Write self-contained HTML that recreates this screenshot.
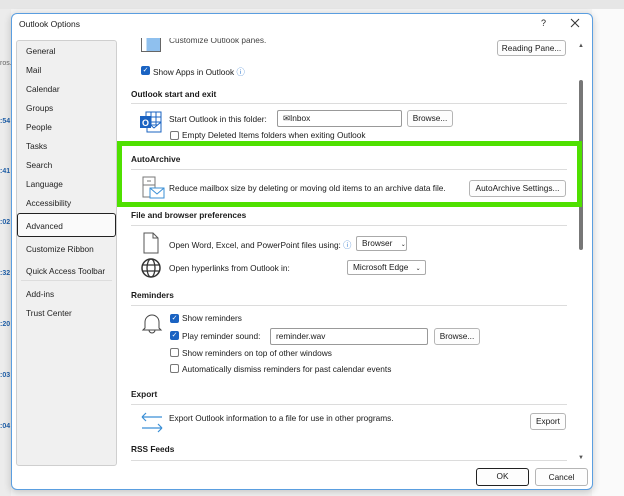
<!DOCTYPE html><html><head><style>
*{margin:0;padding:0;box-sizing:border-box}
body{width:624px;height:496px;background:#f3f3f3;position:relative;overflow:hidden;font-family:"Liberation Sans",sans-serif;font-size:8.3px;color:#1a1a1a}
.a{position:absolute;white-space:nowrap}
.b{font-weight:bold}
.ln{position:absolute;height:1px;background:#dcdcdc;left:131px;width:436px}
.btn{position:absolute;border:1px solid #b5b5b5;border-radius:3px;background:#fdfdfd;text-align:center;line-height:14px}
.cb{position:absolute;width:9px;height:9px;border:1px solid #777;border-radius:2px;background:#fff}
.cb.on{background:#1a63c2;border-color:#1a63c2;color:#fff;font-size:7px;line-height:7px;text-align:center}
.sb{position:absolute;left:28px;color:#222}
.in{position:absolute;border:1px solid #999;border-radius:2px;background:#fff;padding-left:5px;line-height:14px}
</style></head><body>
<div class="a" style="left:0;top:0;width:624px;height:9px;background:#e6e6e6"></div>
<div class="a" style="left:0;top:9px;width:11px;height:487px;background:#ececec"></div>
<div class="a" style="left:0;top:60px;font-size:7px;color:#666">ros.</div>
<div class="a" style="left:0;top:118px;font-size:7px;color:#1f5fa8;font-weight:bold">:54</div>
<div class="a" style="left:0;top:168px;font-size:7px;color:#1f5fa8;font-weight:bold">:41</div>
<div class="a" style="left:0;top:219px;font-size:7px;color:#1f5fa8;font-weight:bold">:02</div>
<div class="a" style="left:0;top:270px;font-size:7px;color:#1f5fa8;font-weight:bold">:32</div>
<div class="a" style="left:0;top:321px;font-size:7px;color:#1f5fa8;font-weight:bold">:20</div>
<div class="a" style="left:0;top:372px;font-size:7px;color:#1f5fa8;font-weight:bold">:03</div>
<div class="a" style="left:0;top:423px;font-size:7px;color:#1f5fa8;font-weight:bold">:04</div>
<div class="a" style="left:592px;top:9px;width:32px;height:487px;background:#fafafa"></div>
<!-- dialog -->
<div class="a" style="left:11px;top:13px;width:582px;height:477px;background:#fff;border:1px solid #5a9ee0;border-radius:6px;box-shadow:0 2px 8px rgba(0,0,0,.2)"></div>
<div class="a" style="left:19px;top:19px;font-size:8.5px">Outlook Options</div>
<div class="a" style="left:541px;top:18px;font-size:9px">?</div>
<svg class="a" style="left:570px;top:18px" width="10" height="10"><path d="M1 1l8 8M9 1l-8 8" stroke="#333" stroke-width="1"/></svg>
<!-- sidebar -->
<div class="a" style="left:16px;top:40px;width:101px;height:426px;background:#f0f0f0;border:1px solid #cfcfcf;border-radius:3px"></div>
<div class="sb a" style="left:26px;top:46px">General</div>
<div class="sb a" style="left:26px;top:65px">Mail</div>
<div class="sb a" style="left:26px;top:84px">Calendar</div>
<div class="sb a" style="left:26px;top:103px">Groups</div>
<div class="sb a" style="left:26px;top:122px">People</div>
<div class="sb a" style="left:26px;top:141px">Tasks</div>
<div class="sb a" style="left:26px;top:160px">Search</div>
<div class="sb a" style="left:26px;top:179px">Language</div>
<div class="sb a" style="left:26px;top:198px">Accessibility</div>
<div class="a" style="left:17px;top:213px;width:99px;height:24px;background:#fafafa;border:1.5px solid #222;border-radius:3px"></div>
<div class="sb a" style="left:26px;top:221px">Advanced</div>
<div class="sb a" style="left:26px;top:244px">Customize Ribbon</div>
<div class="sb a" style="left:26px;top:266px">Quick Access Toolbar</div>
<div class="a" style="left:21px;top:280px;width:91px;height:1px;background:#ddd"></div>
<div class="sb a" style="left:26px;top:289px">Add-ins</div>
<div class="sb a" style="left:26px;top:308px">Trust Center</div>
<!-- scrollbar -->
<div class="a" style="left:578px;top:43px;font-size:6px;color:#555">▲</div>
<div class="a" style="left:579px;top:80px;width:4px;height:170px;background:#777;border-radius:2px"></div>
<div class="a" style="left:578px;top:455px;font-size:6px;color:#555">▼</div>
<!-- top content -->
<div class="a" style="left:120px;top:30px;width:455px;height:380px;overflow:hidden">
<div class="a" style="left:21px;top:7px;width:20px;height:15px;border:1px solid #666;background:linear-gradient(90deg,#fff 25%,#8fc0ee 25%)"></div>
<div class="a" style="left:49px;top:5px;color:#444">Customize Outlook panes.</div>
</div>
<div class="a" style="left:120px;top:29px;width:455px;height:9px;background:#fff"></div>
<div class="btn" style="left:497px;top:40px;width:69px;height:16px">Reading Pane...</div>
<div class="cb on" style="left:141px;top:66px">✓</div>
<div class="a" style="left:153px;top:66px">Show Apps in Outlook <span style="color:#3a7fd0">ⓘ</span></div>
<div class="a b" style="left:131px;top:89px">Outlook start and exit</div>
<div class="ln" style="top:103px"></div>
<svg class="a" style="left:139px;top:111px" width="24" height="22"><rect x="7" y="1" width="15" height="13" fill="none" stroke="#1a63c2"/><path d="M7 6h15M12 1v13M17 1v13" stroke="#1a63c2"/><path d="M8 11l14 0 0 10-14 0zM8 11l7 6 7-6" fill="#fff" stroke="#1a63c2"/><rect x="1" y="5" width="11" height="12" fill="#1a63c2"/><text x="3" y="15" font-size="9" fill="#fff" font-family="Liberation Sans" font-weight="bold">O</text></svg>
<div class="a" style="left:169px;top:114px">Start Outlook in this folder:</div>
<div class="in" style="left:277px;top:110px;width:125px;height:17px">✉Inbox</div>
<div class="btn" style="left:407px;top:110px;width:46px;height:17px">Browse...</div>
<div class="cb" style="left:170px;top:131px"></div>
<div class="a" style="left:182px;top:130px">Empty Deleted Items folders when exiting Outlook</div>
<!-- autoarchive -->
<div class="a" style="left:117px;top:141px;width:465px;height:66px;border:5px solid #4fe000"></div>
<div class="a b" style="left:131px;top:154px">AutoArchive</div>
<div class="ln" style="top:169px"></div>
<svg class="a" style="left:142px;top:176px" width="24" height="24"><rect x="1" y="1" width="12" height="20" fill="#fff" stroke="#777"/><path d="M1 9h12M5 5h4" stroke="#777"/><rect x="8" y="12" width="14" height="10" fill="#fff" stroke="#3a8fd6"/><path d="M8 12l7 6 7-6" fill="none" stroke="#3a8fd6"/></svg>
<div class="a" style="left:169px;top:183px">Reduce mailbox size by deleting or moving old items to an archive data file.</div>
<div class="btn" style="left:469px;top:180px;width:97px;height:17px">AutoArchive Settings...</div>
<!-- file & browser -->
<div class="a b" style="left:131px;top:210px">File and browser preferences</div>
<div class="ln" style="top:225px"></div>
<svg class="a" style="left:143px;top:232px" width="17" height="22"><path d="M1 1h9l5 5v15H1z" fill="#fff" stroke="#555"/><path d="M10 1v5h5" fill="none" stroke="#555"/></svg>
<div class="a" style="left:169px;top:239px">Open Word, Excel, and PowerPoint files using: <span style="color:#3a7fd0">ⓘ</span></div>
<div class="in" style="left:356px;top:236px;width:51px;height:15px;border-color:#aaa;line-height:12px">Browser <span style="font-size:6px;margin-left:6px">⌄</span></div>
<svg class="a" style="left:140px;top:257px" width="22" height="22"><circle cx="11" cy="11" r="9" fill="none" stroke="#333" stroke-width="1.5"/><ellipse cx="11" cy="11" rx="4" ry="9" fill="none" stroke="#333" stroke-width="1.3"/><path d="M2 8h18M2 14h18" stroke="#333" stroke-width="1.3"/></svg>
<div class="a" style="left:169px;top:263px">Open hyperlinks from Outlook in:</div>
<div class="in" style="left:347px;top:260px;width:79px;height:15px;border-color:#aaa;line-height:12px">Microsoft Edge <span style="font-size:6px;margin-left:5px">⌄</span></div>
<!-- reminders -->
<div class="a b" style="left:131px;top:290px">Reminders</div>
<div class="ln" style="top:305px"></div>
<svg class="a" style="left:141px;top:312px" width="22" height="22"><path d="M4 16V10a7 7 0 0 1 14 0v6l2 2H2z" fill="#fff" stroke="#444"/><path d="M8 18a3 3 0 0 0 6 0" fill="none" stroke="#444"/></svg>
<div class="cb on" style="left:170px;top:314px">✓</div>
<div class="a" style="left:182px;top:313px">Show reminders</div>
<div class="cb on" style="left:170px;top:331px">✓</div>
<div class="a" style="left:182px;top:331px">Play reminder sound:</div>
<div class="in" style="left:270px;top:328px;width:158px;height:17px;border-color:#999">reminder.wav</div>
<div class="btn" style="left:434px;top:328px;width:46px;height:17px">Browse...</div>
<div class="cb" style="left:170px;top:348px"></div>
<div class="a" style="left:182px;top:348px">Show reminders on top of other windows</div>
<div class="cb" style="left:170px;top:364px"></div>
<div class="a" style="left:182px;top:364px">Automatically dismiss reminders for past calendar events</div>
<!-- export -->
<div class="a b" style="left:131px;top:389px">Export</div>
<div class="ln" style="top:404px"></div>
<svg class="a" style="left:140px;top:411px" width="24" height="22"><path d="M2 6h20M2 6l4-4M2 6l4 4M2 17h20M22 17l-4-4M22 17l-4 4" fill="none" stroke="#3a8fd6" stroke-width="1.2"/></svg>
<div class="a" style="left:169px;top:413px">Export Outlook information to a file for use in other programs.</div>
<div class="btn" style="left:530px;top:413px;width:36px;height:17px">Export</div>
<div class="a b" style="left:131px;top:444px">RSS Feeds</div>
<div class="ln" style="top:460px"></div>
<!-- ok cancel -->
<div class="btn" style="left:476px;top:468px;width:53px;height:18px;border:1.5px solid #222;line-height:15px">OK</div>
<div class="btn" style="left:535px;top:468px;width:53px;height:18px;line-height:16px">Cancel</div>
</body></html>
